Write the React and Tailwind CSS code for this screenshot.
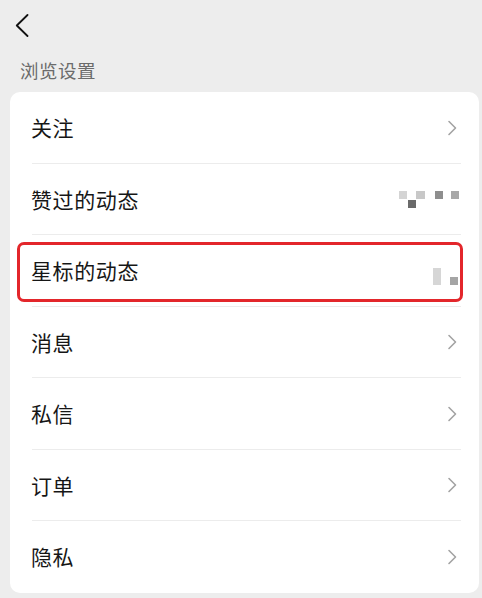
import React from "react";

const Chevron = () => (
  <svg width="10" height="16" viewBox="0 0 10 16" fill="none" className="shrink-0">
    <path d="M2 1.5 L8.5 8 L2 14.5" stroke="#a3a3a3" strokeWidth="1.6" strokeLinecap="round" strokeLinejoin="round" />
  </svg>
);

const Row = ({ label, right, last, highlight }) => (
  <div className="relative h-[71.5px] flex items-center pl-[21px] pr-[22px]">
    <span className="text-[21px] text-[#161616] leading-none tracking-[0.6px]">{label}</span>
    <div className="ml-auto flex items-center">{right}</div>
    {!last && <div className="absolute left-[22px] right-[18px] bottom-0 h-px bg-[#ececec]" />}
    {highlight && (
      <div className="absolute left-[7px] right-[16px] top-[7px] bottom-[5px] border-[3px] border-[#e3262b] rounded-[7px]" />
    )}
  </div>
);

export default function App() {
  const font = { fontFamily: '"Noto Sans CJK SC", "Noto Sans", sans-serif' };
  return (
    <div className="w-[482px] h-[598px] bg-[#ededed] overflow-hidden" style={font}>
      <div className="h-[52px] pl-[15px] pt-[14px]">
        <svg width="14" height="23" viewBox="0 0 14 23" fill="none">
          <path d="M12.5 1 L1.8 11.5 L12.5 22" stroke="#111" strokeWidth="1.8" strokeLinecap="round" strokeLinejoin="round" />
        </svg>
      </div>
      <div className="pl-[20px] h-[40px] text-[18.5px] text-[#6b6b6b] leading-none pt-[9px] tracking-[0.5px]">浏览设置</div>
      <div className="ml-[10px] mr-[3px] bg-white rounded-[10px]">
        <Row label="关注" right={<Chevron />} />
        <Row
          label="赞过的动态"
          right={
            <div className="relative w-[60px] h-[18px] -mr-[2px] mt-[2px]">
              <div className="absolute left-0 top-0 w-2 h-2 bg-[#d4d4d4]" />
              <div className="absolute left-[9px] top-[9px] w-2 h-2 bg-[#6a6a6a]" />
              <div className="absolute left-[17px] top-0 w-[9px] h-2 bg-[#c8c8c8]" />
              <div className="absolute left-[36px] top-0 w-2 h-2 bg-[#8e8e8e]" />
              <div className="absolute left-[52px] top-0 w-2 h-2 bg-[#a8a8a8]" />
            </div>
          }
        />
        <Row
          label="星标的动态"
          highlight
          right={
            <div className="relative w-[26px] h-[18px] -mr-[2px] mt-[12px]">
              <div className="absolute left-0 top-0 w-2 h-[17px] bg-[#d6d6d6]" />
              <div className="absolute left-[17px] top-[9px] w-2 h-2 bg-[#a5a5a5]" />
            </div>
          }
        />
        <Row label="消息" right={<Chevron />} />
        <Row label="私信" right={<Chevron />} />
        <Row label="订单" right={<Chevron />} />
        <Row label="隐私" right={<Chevron />} last />
      </div>
    </div>
  );
}
